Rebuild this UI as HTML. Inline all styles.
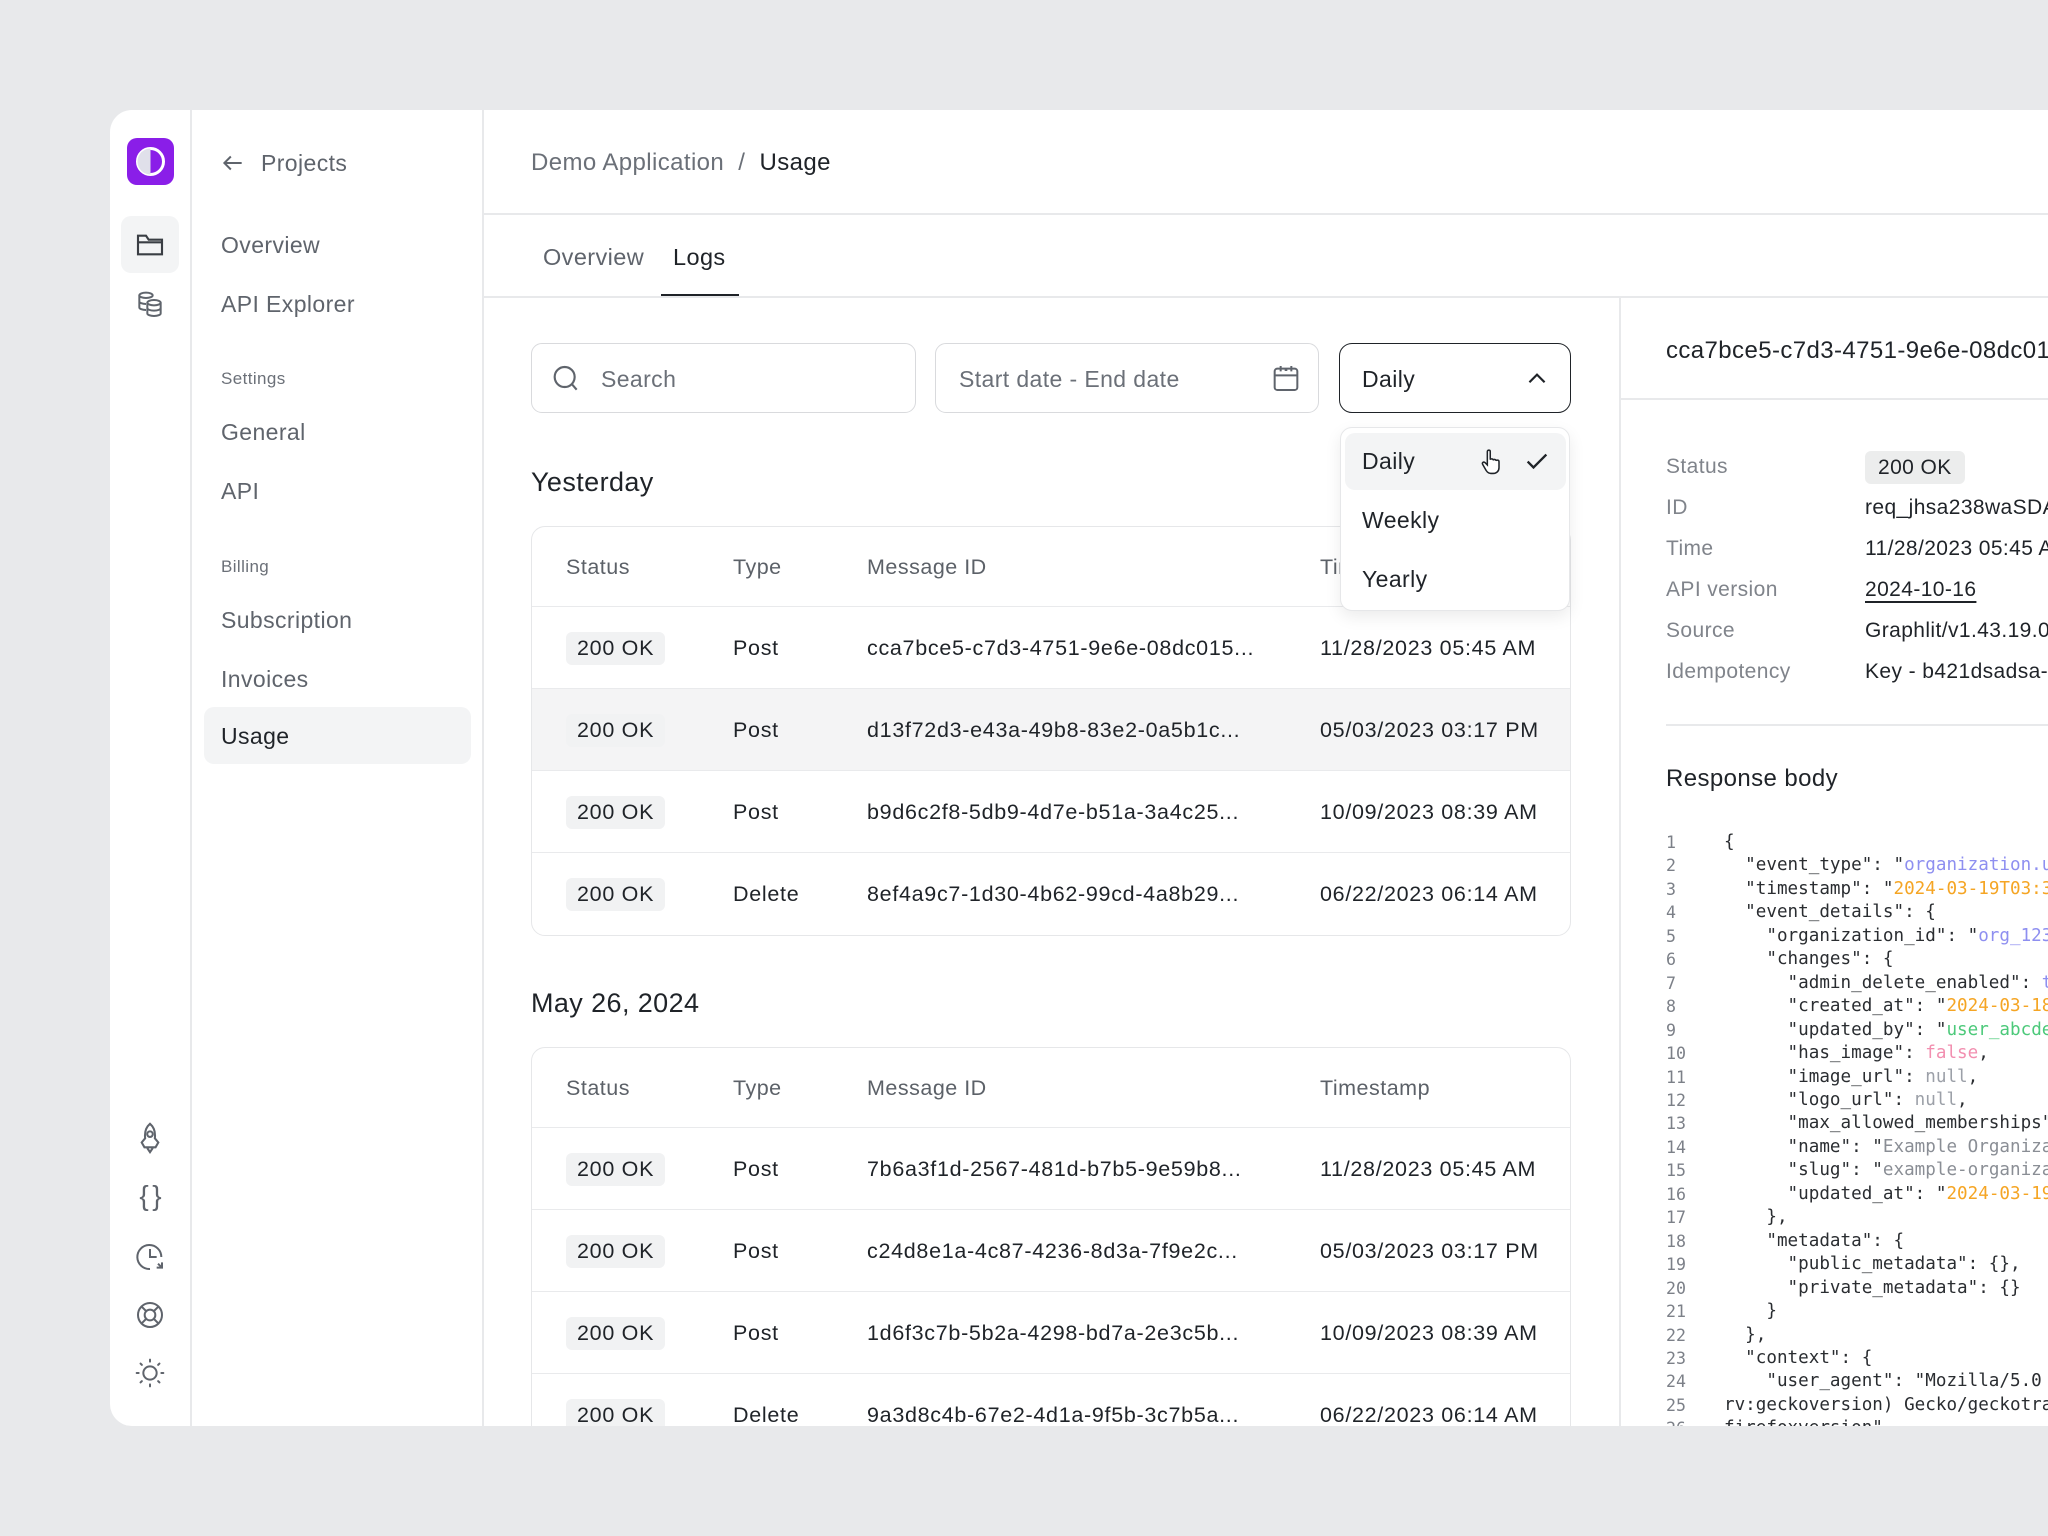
<!DOCTYPE html>
<html><head><meta charset="utf-8"><style>
*{margin:0;padding:0;box-sizing:border-box}
body{width:2048px;height:1536px;background:#e8e9eb;font-family:"Liberation Sans",sans-serif;position:relative;overflow:hidden;color:#1f2328;letter-spacing:0.4px}
.card{position:absolute;left:110px;top:110px;width:1938px;height:1316px;background:#fff;border-radius:22px 0 0 22px;overflow:hidden}
.a{position:absolute;white-space:nowrap;line-height:30px}
.g{color:#6b7078}
.nav{font-size:23px;color:#5f646c}
.hl{position:absolute;background:#f3f4f5;border-radius:10px}
.tbl{position:absolute;left:421px;width:1040px;border:1.5px solid #e6e7e9;border-radius:14px;overflow:hidden;background:#fff}
.row{position:absolute;left:0;right:0;height:82px;border-top:1.5px solid #e9eaec;font-size:21.5px;letter-spacing:0.7px}
.row span{position:absolute;top:26px;line-height:30px;white-space:nowrap}
.badge{background:#f1f2f3;border-radius:6px;padding:0 11px;top:25px!important;line-height:33px!important}
.hd{position:absolute;left:0;right:0;top:0;height:80px;font-size:21.5px;color:#5c6168;letter-spacing:0.5px}
.hd span{position:absolute;top:25px;line-height:30px}
.code,.ln{position:absolute;top:721px;font-family:"DejaVu Sans Mono","Liberation Mono",monospace;font-size:17.6px;line-height:23.45px;white-space:pre;letter-spacing:0}
.code{color:#2a2d31}
.ln{left:1556px;color:#7c8088;font-size:16.6px}
.p{color:#8e8ff0}.o{color:#f5a524}.gr{color:#4cc97a}.pk{color:#f28fb0}.n{color:#9ca0a8}.gy{color:#8a8e95}
</style></head><body>
<div class="card">
 <div style="position:absolute;left:80px;top:0;width:1.5px;height:1316px;background:#e8e9eb"></div>
 <div style="position:absolute;left:17px;top:28px;width:47px;height:47px;border-radius:10px;background:#8a1ee8"></div>
 <svg style="position:absolute;left:17px;top:28px" width="47" height="47" viewBox="0 0 47 47"><circle cx="23.5" cy="23.5" r="13" fill="none" stroke="#fff" stroke-width="3"/><path d="M23.5 10.5 A13 13 0 0 0 23.5 36.5Z" fill="#e0e0ea"/></svg>
 <div class="hl" style="left:11px;top:106px;width:58px;height:57px"></div>
 <svg style="position:absolute;left:24px;top:119px" width="32" height="32" viewBox="0 0 24 24" fill="none" stroke="#3a3e44" stroke-width="1.6"><path d="M3 6V19H21V8H11L9 5H3Z M3 10H21"/></svg>
 <svg style="position:absolute;left:24px;top:178px" width="32" height="32" viewBox="0 0 24 24" fill="none" stroke="#5f646c" stroke-width="1.5"><ellipse cx="9" cy="5.5" rx="5" ry="2"/><path d="M4 5.5v9c0 1.1 2.2 2 5 2M4 10c0 1.1 2.2 2 5 2"/><ellipse cx="15" cy="11" rx="5" ry="2"/><path d="M10 11v8c0 1.1 2.2 2 5 2s5-.9 5-2v-8M10 15c0 1.1 2.2 2 5 2s5-.9 5-2"/></svg>
 <svg style="position:absolute;left:23px;top:1011px" width="34" height="36" viewBox="0 0 24 26" fill="none" stroke="#5f646c" stroke-width="1.5"><path d="M12 2c3 2.5 4 6 3.5 10.5l2.5 3-2 3.5h-8l-2-3.5 2.5-3C8 8 9 4.5 12 2z"/><circle cx="12" cy="9.5" r="2"/><path d="M10 19.5l2 3 2-3"/></svg>
 <div class="a" style="left:25px;top:1071px;width:30px;text-align:center;font-size:28px;color:#5f646c;letter-spacing:-1px;font-family:'Liberation Sans',sans-serif;font-weight:300">{&#8201;}</div>
 <svg style="position:absolute;left:24px;top:1131px" width="32" height="32" viewBox="0 0 24 24" fill="none" stroke="#5f646c" stroke-width="1.5"><path d="M20.5 12A9 9 0 1 0 12 21M12 6v6h5M21 16v4h-4M21 20l-3-3"/></svg>
 <svg style="position:absolute;left:24px;top:1189px" width="32" height="32" viewBox="0 0 24 24" fill="none" stroke="#5f646c" stroke-width="1.5"><circle cx="12" cy="12" r="9"/><circle cx="12" cy="12" r="4"/><path d="M5.6 5.6l3.6 3.6M18.4 5.6l-3.6 3.6M5.6 18.4l3.6-3.6M18.4 18.4l-3.6-3.6"/></svg>
 <svg style="position:absolute;left:24px;top:1247px" width="32" height="32" viewBox="0 0 24 24" fill="none" stroke="#5f646c" stroke-width="1.5" stroke-linecap="round"><circle cx="12" cy="12" r="5"/><path d="M12 2v1.5M12 20.5V22M2 12h1.5M20.5 12H22M4.9 4.9l1 1M18.1 18.1l1 1M4.9 19.1l1-1M18.1 5.9l1-1"/></svg>
 <div style="position:absolute;left:372px;top:0;width:1.5px;height:1316px;background:#e8e9eb"></div>
 <svg style="position:absolute;left:110px;top:40px" width="26" height="26" viewBox="0 0 24 24" fill="none" stroke="#5f646c" stroke-width="1.8"><path d="M20 12H4M10 6l-6 6 6 6"/></svg>
 <div class="a nav" style="left:151px;top:38px">Projects</div>
 <div class="a nav" style="left:111px;top:120px">Overview</div>
 <div class="a nav" style="left:111px;top:179px">API Explorer</div>
 <div class="a g" style="left:111px;top:254px;font-size:17px">Settings</div>
 <div class="a nav" style="left:111px;top:307px">General</div>
 <div class="a nav" style="left:111px;top:366px">API</div>
 <div class="a g" style="left:111px;top:442px;font-size:17px">Billing</div>
 <div class="a nav" style="left:111px;top:495px">Subscription</div>
 <div class="a nav" style="left:111px;top:554px">Invoices</div>
 <div class="hl" style="left:94px;top:597px;width:267px;height:57px"></div>
 <div class="a nav" style="left:111px;top:611px;color:#1f2328">Usage</div>
 <div class="a" style="left:421px;top:38px;font-size:24px;color:#6b7078">Demo Application &nbsp;/&nbsp; <span style="color:#1f2328">Usage</span></div>
 <div style="position:absolute;left:373px;top:103px;right:0;height:1.5px;background:#e8e9eb"></div>
 <div class="a" style="left:433px;top:132px;font-size:23.5px;color:#5f646c">Overview</div>
 <div class="a" style="left:563px;top:132px;font-size:23.5px;color:#1f2328">Logs</div>
 <div style="position:absolute;left:551px;top:184px;width:78px;height:3px;background:#1f2328"></div>
 <div style="position:absolute;left:373px;top:186px;right:0;height:1.5px;background:#e8e9eb"></div>
 <div style="position:absolute;left:421px;top:233px;width:385px;height:70px;border:1.5px solid #d9dadd;border-radius:11px"></div>
 <svg style="position:absolute;left:440px;top:253px" width="32" height="32" viewBox="0 0 24 24" fill="none" stroke="#5f646c" stroke-width="1.6"><circle cx="11" cy="10.5" r="7.5"/><path d="M16.5 16l3.5 4"/></svg>
 <div class="a g" style="left:491px;top:254px;font-size:23px">Search</div>
 <div style="position:absolute;left:825px;top:233px;width:384px;height:70px;border:1.5px solid #d9dadd;border-radius:11px"></div>
 <div class="a g" style="left:849px;top:254px;font-size:23px">Start date - End date</div>
 <svg style="position:absolute;left:1160px;top:252px" width="32" height="32" viewBox="0 0 24 24" fill="none" stroke="#5f646c" stroke-width="1.5"><rect x="3.5" y="5" width="17" height="16" rx="2"/><path d="M3.5 10h17M8 3v4M16 3v4M11 6h2"/></svg>
 <div style="position:absolute;left:1229px;top:233px;width:232px;height:70px;border:1.8px solid #1f2328;border-radius:13px"></div>
 <div class="a" style="left:1252px;top:254px;font-size:23px">Daily</div>
 <svg style="position:absolute;left:1414px;top:256px" width="26" height="26" viewBox="0 0 24 24" fill="none" stroke="#1f2328" stroke-width="2"><path d="M5 15l7-7 7 7"/></svg>
 <div class="a" style="left:421px;top:357px;font-size:27px;color:#1f2328">Yesterday</div>
 <div class="tbl" style="top:416px;height:410px">
  <div class="hd"><span style="left:34px">Status</span><span style="left:201px">Type</span><span style="left:335px">Message ID</span><span style="left:788px">Timestamp</span></div>
  <div class="row" style="top:79px"><span class="badge" style="left:34px">200 OK</span><span style="left:201px">Post</span><span style="left:335px">cca7bce5-c7d3-4751-9e6e-08dc015...</span><span style="left:788px">11/28/2023 05:45 AM</span></div>
  <div class="row" style="top:161px;background:#f4f4f5"><span class="badge" style="left:34px">200 OK</span><span style="left:201px">Post</span><span style="left:335px">d13f72d3-e43a-49b8-83e2-0a5b1c...</span><span style="left:788px">05/03/2023 03:17 PM</span></div>
  <div class="row" style="top:243px"><span class="badge" style="left:34px">200 OK</span><span style="left:201px">Post</span><span style="left:335px">b9d6c2f8-5db9-4d7e-b51a-3a4c25...</span><span style="left:788px">10/09/2023 08:39 AM</span></div>
  <div class="row" style="top:325px"><span class="badge" style="left:34px">200 OK</span><span style="left:201px">Delete</span><span style="left:335px">8ef4a9c7-1d30-4b62-99cd-4a8b29...</span><span style="left:788px">06/22/2023 06:14 AM</span></div>
 </div>
 <div class="a" style="left:421px;top:878px;font-size:27px;color:#1f2328">May 26, 2024</div>
 <div class="tbl" style="top:937px;height:420px">
  <div class="hd"><span style="left:34px">Status</span><span style="left:201px">Type</span><span style="left:335px">Message ID</span><span style="left:788px">Timestamp</span></div>
  <div class="row" style="top:79px"><span class="badge" style="left:34px">200 OK</span><span style="left:201px">Post</span><span style="left:335px">7b6a3f1d-2567-481d-b7b5-9e59b8...</span><span style="left:788px">11/28/2023 05:45 AM</span></div>
  <div class="row" style="top:161px"><span class="badge" style="left:34px">200 OK</span><span style="left:201px">Post</span><span style="left:335px">c24d8e1a-4c87-4236-8d3a-7f9e2c...</span><span style="left:788px">05/03/2023 03:17 PM</span></div>
  <div class="row" style="top:243px"><span class="badge" style="left:34px">200 OK</span><span style="left:201px">Post</span><span style="left:335px">1d6f3c7b-5b2a-4298-bd7a-2e3c5b...</span><span style="left:788px">10/09/2023 08:39 AM</span></div>
  <div class="row" style="top:325px"><span class="badge" style="left:34px">200 OK</span><span style="left:201px">Delete</span><span style="left:335px">9a3d8c4b-67e2-4d1a-9f5b-3c7b5a...</span><span style="left:788px">06/22/2023 06:14 AM</span></div>
 </div>
 <div style="position:absolute;left:1230px;top:317px;width:230px;height:184px;background:#fff;border:1.5px solid #e6e7e9;border-radius:12px;box-shadow:0 6px 16px rgba(0,0,0,.08)"></div>
 <div class="hl" style="left:1235px;top:323px;width:221px;height:57px"></div>
 <div class="a" style="left:1252px;top:336px;font-size:23px">Daily</div>
 <div class="a" style="left:1252px;top:395px;font-size:23px">Weekly</div>
 <div class="a" style="left:1252px;top:454px;font-size:23px">Yearly</div>
 <svg style="position:absolute;left:1413px;top:337px" width="28" height="28" viewBox="0 0 24 24" fill="none" stroke="#1f2328" stroke-width="2"><path d="M4 12.5l5 5L20 6.5"/></svg>
 <svg style="position:absolute;left:1370px;top:338px" width="24" height="28" viewBox="0 0 20 24" fill="#fff" stroke="#1f2328" stroke-width="1.3"><path d="M6 3c0-1.5 2.5-1.5 2.5 0v7c.5-1 2.5-1 2.5.5.5-1 2.5-1 2.5.5.5-1 2.5-.8 2.5.8v5c0 3-2 5-5 5h-2c-2 0-3-1-4-2.5L2 14c-.8-1.3.8-2.6 2-1.5L6 14.5z"/></svg>
 <div style="position:absolute;left:1509px;top:187px;width:1.5px;height:1200px;background:#e8e9eb"></div>
 <div class="a" style="left:1556px;top:226px;font-size:24px;color:#1f2328">cca7bce5-c7d3-4751-9e6e-08dc015b2c9a</div>
 <div style="position:absolute;left:1510px;top:288px;right:0;height:1.5px;background:#e8e9eb"></div>
 <div class="a g" style="left:1556px;top:342px;font-size:21px;color:#80848b">Status</div>
 <div class="a" style="left:1755px;top:341px;font-size:21px;background:#eceded;border-radius:6px;padding:0 13px;line-height:33px">200 OK</div>
 <div class="a g" style="left:1556px;top:383px;font-size:21px;color:#80848b">ID</div>
 <div class="a" style="left:1755px;top:383px;font-size:21px">req_jhsa238waSDAsd</div>
 <div class="a g" style="left:1556px;top:424px;font-size:21px;color:#80848b">Time</div>
 <div class="a" style="left:1755px;top:424px;font-size:21px">11/28/2023 05:45 AM</div>
 <div class="a g" style="left:1556px;top:465px;font-size:21px;color:#80848b">API version</div>
 <div class="a" style="left:1755px;top:465px;font-size:21px;text-decoration:underline;text-underline-offset:5px">2024-10-16</div>
 <div class="a g" style="left:1556px;top:506px;font-size:21px;color:#80848b">Source</div>
 <div class="a" style="left:1755px;top:506px;font-size:21px">Graphlit/v1.43.19.0</div>
 <div class="a g" style="left:1556px;top:547px;font-size:21px;color:#80848b">Idempotency</div>
 <div class="a" style="left:1755px;top:547px;font-size:21px">Key - b421dsadsa-88</div>
 <div style="position:absolute;left:1556px;top:614px;right:0;height:1.5px;background:#e8e9eb"></div>
 <div class="a" style="left:1556px;top:654px;font-size:24px">Response body</div>
<div class="ln">1
2
3
4
5
6
7
8
9
10
11
12
13
14
15
16
17
18
19
20
21
22
23
24
25
26</div>
<div class="code" style="left:1614px">{
  "event_type": "<span class="p">organization.updated</span>",
  "timestamp": "<span class="o">2024-03-19T03:30:00Z</span>",
  "event_details": {
    "organization_id": "<span class="p">org_12345</span>",
    "changes": {
      "admin_delete_enabled": <span class="p">true</span>,
      "created_at": "<span class="o">2024-03-18</span>",
      "updated_by": "<span class="gr">user_abcdef</span>",
      "has_image": <span class="pk">false</span>,
      "image_url": <span class="n">null</span>,
      "logo_url": <span class="n">null</span>,
      "max_allowed_memberships": 5,
      "name": "<span class="gy">Example Organization</span>",
      "slug": "<span class="gy">example-organization</span>",
      "updated_at": "<span class="o">2024-03-19</span>"
    },
    "metadata": {
      "public_metadata": {},
      "private_metadata": {}
    }
  },
  "context": {
    "user_agent": "Mozilla/5.0 (Windows;
rv:geckoversion) Gecko/geckotrail
firefoxversion"</div>
</div>
</body></html>
